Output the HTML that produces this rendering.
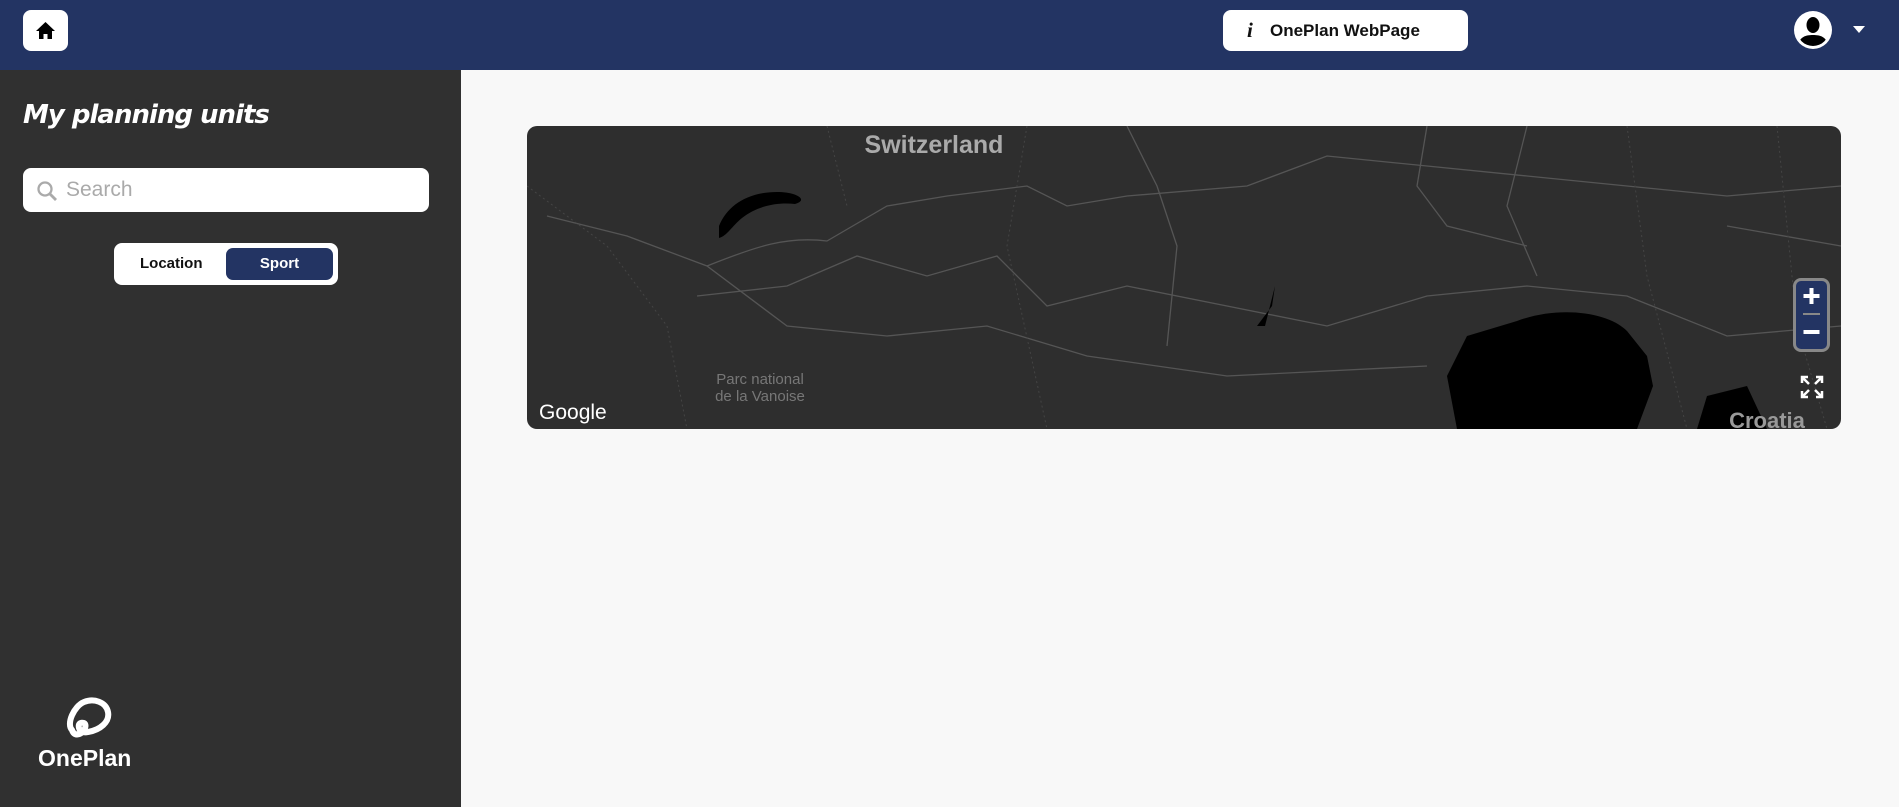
<!DOCTYPE html>
<html><head><meta charset="utf-8"><style>
*{margin:0;padding:0;box-sizing:border-box}
body{width:1899px;height:807px;overflow:hidden;background:#f8f8f8;font-family:"Liberation Sans",sans-serif;position:relative}
.top{position:absolute;left:0;top:0;width:1899px;height:70px;background:#233463}
.home{position:absolute;left:23px;top:10px;width:45px;height:41px;background:#fff;border-radius:8px}
.web{position:absolute;left:1223px;top:10px;width:245px;height:41px;background:#fff;border-radius:8px;font-weight:bold;font-size:17px;line-height:41px;color:#111}
.side{position:absolute;left:0;top:70px;width:461px;height:737px;background:#303030}
.title{position:absolute;left:23px;color:#fff;font-style:italic;font-weight:bold;font-size:26px;font-family:"DejaVu Sans",sans-serif;letter-spacing:-1px}
.search{position:absolute;left:23px;width:406px;height:44px;background:#fff;border-radius:8px;color:#aaa;font-size:21px;line-height:44px;padding-left:43px}
.tog{position:absolute;left:114px;width:224px;height:42px;background:#fff;border-radius:8px}
.tog .a{position:absolute;left:26px;top:0;line-height:42px;font-weight:bold;font-size:15px;color:#111}
.tog .b{position:absolute;left:112px;top:5px;width:107px;height:32px;background:#233463;border-radius:7px;color:#fff;font-weight:bold;font-size:15px;line-height:32px;text-align:center}
.map{position:absolute;left:527px;top:126px;width:1314px;height:303px;background:#2e2e2e;border-radius:10px;overflow:hidden}
</style></head><body>
<div class="top"></div>
<div class="home"><svg width="45" height="41" viewBox="0 0 45 41"><path d="M22.5 12 L13 21 H16 V29 H20.5 V24 H24.5 V29 H29 V21 H32 Z" fill="#000"/></svg></div>
<div class="web"><span style="position:absolute;left:24px;font-family:'Liberation Serif',serif;font-style:italic;font-size:21px">i</span><span style="position:absolute;left:47px">OnePlan WebPage</span></div>
<svg style="position:absolute;left:1793px;top:10px" width="40" height="40" viewBox="0 0 40 40"><circle cx="20" cy="20" r="19" fill="#fff"/><clipPath id="c"><circle cx="20" cy="20" r="16"/></clipPath><g clip-path="url(#c)"><ellipse cx="20" cy="15" rx="6.5" ry="8" fill="#000"/><path d="M4 40 C5 27 12 25 20 25 C28 25 35 27 36 40Z" fill="#000"/></g></svg>
<svg style="position:absolute;left:1853px;top:26px" width="12" height="8"><path d="M0 0H12L6 7Z" fill="#fff"/></svg>
<div class="side">
<div class="title" style="top:30px">My planning units</div>
<div class="search" style="top:98px"><svg style="position:absolute;left:13px;top:12px" width="22" height="22" viewBox="0 0 22 22"><circle cx="9" cy="9" r="6.5" stroke="#aaa" stroke-width="2.3" fill="none"/><path d="M14 14L20 20" stroke="#aaa" stroke-width="2.8"/></svg>Search</div>
<div class="tog" style="top:173px"><span class="a">Location</span><div class="b">Sport</div></div>
<svg style="position:absolute;left:60px;top:626px" width="66" height="50" viewBox="0 0 66 50"><path d="M12 34 C6 28 14 10 24 6 C34 2 46 6 48 16 C50 26 40 34 28 36 C24 37 20 36 19 32 C18 28 20 26 24 27 C26 28 26 31 24 34 C20 40 14 40 12 34Z" stroke="#fff" stroke-width="6" fill="none" stroke-linejoin="round"/></svg>
<div style="position:absolute;left:38px;top:675px;color:#fff;font-weight:bold;font-size:23px">OnePlan</div>
</div>
<div class="map">
<svg width="1314" height="303" style="position:absolute;left:0;top:0">
<g stroke="#555" stroke-width="1.3" fill="none">
<path d="M180 140 C230 120 260 110 300 115 L360 80 L420 70 L500 60 L540 80 L600 70 L720 60 L800 30 L900 40 L1000 50 L1100 60 L1200 70 L1314 60"/>
<path d="M170 170 L260 160 L330 130 L400 150 L470 130 L520 180 L600 160 L700 180 L800 200 L900 170 L1000 160 L1100 170 L1200 210 L1314 200"/>
<path d="M20 90 L100 110 L180 140 L260 200 L360 210 L460 200 L560 230 L700 250 L900 240"/>
<path d="M600 0 L630 60 L650 120 L640 220"/><path d="M1000 0 L980 80 L1010 150"/>
<path d="M900 0 L890 60 L920 100 L1000 120"/><path d="M1200 100 L1314 120"/>
</g>
<g stroke="#444" stroke-width="1" stroke-dasharray="2 3" fill="none">
<path d="M0 60 L80 120 L140 200 L160 303"/><path d="M500 0 L480 120 L520 303"/><path d="M1100 0 L1120 150 L1160 303"/><path d="M300 0 L320 80"/><path d="M1250 0 L1270 200 L1300 303"/>
</g>
<path d="M192 100 C200 80 220 66 250 66 C270 66 282 74 268 78 C250 76 230 80 215 92 C205 100 200 110 192 112 Z" fill="#000"/>
<path d="M990 195 C1030 180 1080 185 1100 205 L1120 230 L1126 260 L1110 303 L930 303 L920 250 L940 210 Z" fill="#000"/>
<path d="M1180 270 L1220 260 L1240 303 L1170 303Z" fill="#000"/>
<path d="M730 200 L745 180 L748 160 L738 200Z" fill="#000"/>
<text x="407" y="27" fill="#aaa" font-size="25" font-weight="bold" text-anchor="middle">Switzerland</text>
<text x="233" y="258" fill="#777" font-size="15" text-anchor="middle">Parc national</text>
<text x="233" y="275" fill="#777" font-size="15" text-anchor="middle">de la Vanoise</text>
<text x="1240" y="302" fill="#999" font-size="22" font-weight="bold" text-anchor="middle">Croatia</text>
<text x="12" y="293" fill="#fff" font-size="21">Google</text>
</svg>
<div style="position:absolute;left:1266px;top:152px;width:37px;height:74px;background:#233463;border:3px solid #888;border-radius:8px">
<svg width="31" height="68"><path d="M15.5 7V23M7.5 15H23.5" stroke="#fff" stroke-width="4"/><path d="M7 33H24" stroke="#888" stroke-width="2"/><path d="M7.5 51H23.5" stroke="#fff" stroke-width="4"/></svg></div>
<svg style="position:absolute;left:1273px;top:249px" width="24" height="24" viewBox="0 0 24 24" stroke="#fff" stroke-width="2.5" fill="none"><path d="M2 8V2H8M2 2L9 9M16 2H22V8M22 2L15 9M2 16V22H8M2 22L9 15M22 16V22H16M22 22L15 15"/></svg>
</div>
</body></html>
